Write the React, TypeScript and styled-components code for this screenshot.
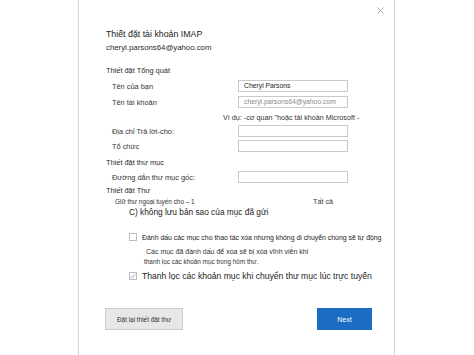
import React from "react";
import styled, { createGlobalStyle } from "styled-components";

const GlobalStyle = createGlobalStyle`
  html, body {
    margin: 0;
    padding: 0;
    background: #ffffff;
  }
  body {
    font-family: "Liberation Sans", Arial, sans-serif;
    color: #262626;
  }
`;

const Dialog = styled.div`
  box-sizing: border-box;
  margin-left: 78px;
  width: 317px;
  height: 355px;
  border-left: 1px solid #d4d4d4;
  border-right: 1px solid #d4d4d4;
  padding: 0 22px 0 27px;
  display: flex;
  flex-direction: column;
  overflow: hidden;
`;

const CloseRow = styled.div`
  height: 20px;
  display: flex;
  justify-content: flex-end;
  align-items: center;
  margin-right: -13px;
`;

const CloseButton = styled.button`
  border: none;
  background: none;
  padding: 0;
  width: 10px;
  height: 10px;
  display: flex;
  align-items: center;
  justify-content: center;
`;

const Title = styled.div`
  margin-top: 7px;
  font-size: 8.8px;
  line-height: 14px;
  color: #222;
`;

const Email = styled.div`
  font-size: 7.8px;
  line-height: 12px;
  margin-top: 1px;
  color: #2a2a2a;
`;

const Section = styled.div<{ $top: number }>`
  margin-top: ${(p) => p.$top}px;
  font-size: 7.4px;
  line-height: 10px;
  color: #2a2a2a;
`;

const FieldRow = styled.div<{ $top: number }>`
  margin-top: ${(p) => p.$top}px;
  display: grid;
  grid-template-columns: 132px 110px;
  align-items: center;
  height: 12px;
`;

const FieldLabel = styled.span`
  padding-left: 6px;
  font-size: 7.4px;
  color: #333;
`;

const Input = styled.div<{ $muted?: boolean }>`
  box-sizing: border-box;
  height: 12px;
  border: 1px solid #c9c9c9;
  background: #fff;
  font-size: 6.8px;
  line-height: 10px;
  padding-left: 5px;
  color: ${(p) => (p.$muted ? "#8a8a8a" : "#222")};
  white-space: nowrap;
  overflow: hidden;
`;

const Hint = styled.div`
  margin-top: 5px;
  padding-left: 117px;
  font-size: 7.2px;
  line-height: 10px;
  color: #333;
  white-space: nowrap;
`;

const KeepRow = styled.div`
  margin-top: 1px;
  display: grid;
  grid-template-columns: 198px auto;
  padding-left: 9px;
  font-size: 6.4px;
  line-height: 10px;
  color: #333;
`;

const KeepValue = styled.span`
  font-size: 7.2px;
`;

const Option = styled.div`
  padding-left: 23px;
  font-size: 8.3px;
  line-height: 10px;
  color: #222;
  white-space: nowrap;
`;

const CheckRow = styled.div<{ $top: number; $large?: boolean }>`
  margin-top: ${(p) => p.$top}px;
  display: flex;
  align-items: center;
  gap: 5px;
  height: 10px;
  padding-left: 23px;
  font-size: ${(p) => (p.$large ? "8.6px" : "6.9px")};
  color: #222;
  white-space: nowrap;
`;

const Box = styled.span`
  box-sizing: border-box;
  width: 8px;
  height: 8px;
  border: 1px solid #bdbdbd;
  background: #fff;
  display: flex;
  align-items: center;
  justify-content: center;
  flex: none;
`;

const Note = styled.div<{ $top: number; $indent: number; $size: number }>`
  margin-top: ${(p) => p.$top}px;
  padding-left: ${(p) => p.$indent}px;
  font-size: ${(p) => p.$size}px;
  line-height: 10px;
  color: #333;
  white-space: nowrap;
`;

const ButtonRow = styled.div`
  margin-top: 27px;
  margin-left: -1px;
  display: flex;
  justify-content: space-between;
  align-items: center;
`;

const ResetButton = styled.button`
  box-sizing: border-box;
  width: 78px;
  height: 22px;
  border: 1px solid #cacaca;
  background: #e7e7e7;
  font-family: "Liberation Sans", Arial, sans-serif;
  font-size: 6.4px;
  color: #333;
  padding: 0;
`;

const NextButton = styled.button`
  box-sizing: border-box;
  width: 55px;
  height: 22px;
  border: none;
  background: #1a6dc2;
  font-family: "Liberation Sans", Arial, sans-serif;
  font-size: 7px;
  color: #fff;
  padding: 0;
`;

const App = () => {
  return (
    <>
      <GlobalStyle />
      <Dialog>
        <CloseRow>
          <CloseButton>
            <svg width="7" height="7" viewBox="0 0 7 7">
              <path d="M0.5 0.5 L6.5 6.5 M6.5 0.5 L0.5 6.5" stroke="#a0a0a0" strokeWidth="0.9" />
            </svg>
          </CloseButton>
        </CloseRow>

        <Title>Thiết đặt tài khoản IMAP</Title>
        <Email>cheryl.parsons64@yahoo.com</Email>

        <Section $top={12}>Thiết đặt Tổng quát</Section>
        <FieldRow $top={4}>
          <FieldLabel>Tên của bạn</FieldLabel>
          <Input>Cheryl Parsons</Input>
        </FieldRow>
        <FieldRow $top={4}>
          <FieldLabel>Tên tài khoản</FieldLabel>
          <Input $muted>cheryl.parsons64@yahoo.com</Input>
        </FieldRow>
        <Hint>Ví dụ: -cơ quan "hoặc tài khoản Microsoft -</Hint>
        <FieldRow $top={2}>
          <FieldLabel>Địa chỉ Trả lời-cho:</FieldLabel>
          <Input />
        </FieldRow>
        <FieldRow $top={3}>
          <FieldLabel>Tổ chức</FieldLabel>
          <Input />
        </FieldRow>

        <Section $top={6}>Thiết đặt thư mục</Section>
        <FieldRow $top={3}>
          <FieldLabel>Đường dẫn thư mục gốc:</FieldLabel>
          <Input />
        </FieldRow>

        <Section $top={3}>Thiết đặt Thư</Section>
        <KeepRow>
          <span>Giữ thư ngoại tuyến cho – 1</span>
          <KeepValue>Tất cả</KeepValue>
        </KeepRow>
        <Option>C) không lưu bản sao của mục đã gửi</Option>

        <CheckRow $top={15}>
          <Box />
          <span>Đánh dấu các mục cho thao tác xóa nhưng không di chuyển chúng sẽ tự động</span>
        </CheckRow>
        <Note $top={5} $indent={40} $size={7}>
          Các mục đã đánh dấu để xóa sẽ bị xóa vĩnh viễn khi
        </Note>
        <Note $top={0} $indent={38} $size={6.4}>
          thanh lọc các khoản mục trong hôm thư.
        </Note>
        <CheckRow $top={4} $large>
          <Box>
            <svg width="6" height="6" viewBox="0 0 6 6">
              <path d="M0.8 3.2 L2.4 4.8 L5.3 1.2" stroke="#8a8a8a" strokeWidth="0.8" fill="none" />
            </svg>
          </Box>
          <span>Thanh lọc các khoản mục khi chuyển thư mục lúc trực tuyến</span>
        </CheckRow>

        <ButtonRow>
          <ResetButton>Đặt lại thiết đặt thư</ResetButton>
          <NextButton>Next</NextButton>
        </ButtonRow>
      </Dialog>
    </>
  );
};

export default App;
